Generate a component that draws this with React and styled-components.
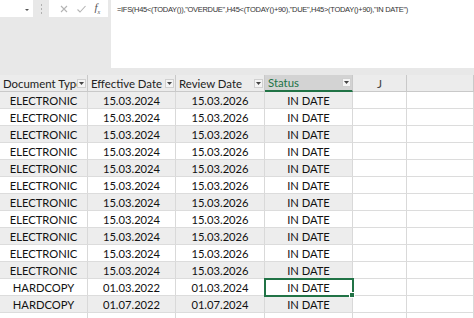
import React from 'react'
import styled, { createGlobalStyle } from 'styled-components'

const GlobalStyle = createGlobalStyle`
  html, body {
    margin: 0;
    padding: 0;
    background: #e8e8e8;
  }
  body {
    width: 474px;
    height: 318px;
    overflow: hidden;
    font-family: Lato, "Liberation Sans", sans-serif;
  }
`

const rows = [
  ...Array.from({ length: 11 }, () => ['ELECTRONIC', '15.03.2024', '15.03.2026', 'IN DATE']),
  ['HARDCOPY', '01.03.2022', '01.03.2024', 'IN DATE'],
  ['HARDCOPY', '01.07.2022', '01.07.2024', 'IN DATE'],
  ['', '', '', ''],
]

const headers = ['Document Type', 'Effective Date', 'Review Date', 'Status']

const formula = '=IFS(H45<(TODAY()),"OVERDUE",H45<(TODAY()+90),"DUE",H45>(TODAY()+90),"IN DATE")'

export default function App() {
  return (
    <>
      <GlobalStyle />
      <Frame>
        <FormulaBar>
          <NameBox>
            <Caret />
          </NameBox>
          <Grip>
            <i /><i /><i />
          </Grip>
          <IconBox>
            <svg width="10" height="10" viewBox="0 0 10 10">
              <path d="M2 2 L8 8 M8 2 L2 8" stroke="#b4b4b4" strokeWidth="1.1" fill="none" />
            </svg>
            <svg width="11" height="10" viewBox="0 0 11 10">
              <path d="M1.5 5.5 L4 8 L9.5 2" stroke="#b4b4b4" strokeWidth="1.1" fill="none" />
            </svg>
            <Fx>f<sub>x</sub></Fx>
          </IconBox>
          <FormulaInput>{formula}</FormulaInput>
        </FormulaBar>

        <Sheet>
          {headers.map((h, i) => (
            <HeaderCell key={h} $active={i === 3}>
              <HeaderText>{h}</HeaderText>
              <FilterButton>
                <svg width="5" height="3" viewBox="0 0 5 3">
                  <path d="M0 0 H5 L2.5 3 Z" fill="#444" />
                </svg>
              </FilterButton>
            </HeaderCell>
          ))}
          <LetterCell>J</LetterCell>
          <LetterCell />

          {rows.map((r, ri) => (
            <React.Fragment key={ri}>
              {r.map((v, ci) => (
                <Cell
                  key={ci}
                  $band={ri % 2 === 0 && ri < 13}
                  $selected={ri === 11 && ci === 3}
                >
                  {v}
                  {ri === 11 && ci === 3 && <FillHandle />}
                </Cell>
              ))}
              <Cell />
              <Cell />
            </React.Fragment>
          ))}
        </Sheet>
      </Frame>
    </>
  )
}

const Frame = styled.div`
  width: 474px;
  height: 318px;
  display: flex;
  flex-direction: column;
  background: #e8e8e8;
`

const FormulaBar = styled.div`
  display: flex;
  align-items: flex-start;
  height: 68px;
  margin-bottom: 7px;
`

const NameBox = styled.div`
  width: 33px;
  height: 17px;
  background: #fff;
  display: flex;
  align-items: center;
  justify-content: flex-end;
  padding-right: 4px;
  box-sizing: border-box;
`

const Caret = styled.span`
  width: 0;
  height: 0;
  margin-top: 2px;
  border-left: 2px solid transparent;
  border-right: 2px solid transparent;
  border-top: 2px solid #555;
`

const Grip = styled.div`
  width: 16px;
  height: 17px;
  display: flex;
  flex-direction: column;
  align-items: center;
  justify-content: center;
  gap: 2px;

  i {
    width: 1px;
    height: 2px;
    background: #b0b0b0;
  }
`

const IconBox = styled.div`
  width: 59px;
  height: 17px;
  background: #fff;
  display: flex;
  align-items: center;
  justify-content: space-around;
  padding: 0 4px 0 6px;
  box-sizing: border-box;
`

const Fx = styled.span`
  font-family: "Liberation Serif", serif;
  font-style: italic;
  font-size: 11px;
  color: #555;

  sub {
    font-size: 6px;
  }
`

const FormulaInput = styled.div`
  flex: 1;
  height: 68px;
  margin-left: 3px;
  background: #fff;
  box-sizing: border-box;
  padding: 5px 0 0 6px;
  font-family: "Liberation Sans", sans-serif;
  font-size: 7.5px;
  letter-spacing: -0.3px;
  color: #333;
  white-space: nowrap;
  overflow: hidden;
`

const Sheet = styled.div`
  flex: 1;
  display: grid;
  grid-template-columns: 88px 88px 89px 88px 54px 1fr;
  grid-auto-rows: 17px;
  background: #fff;
  overflow: hidden;
`

const HeaderCell = styled.div`
  display: flex;
  align-items: center;
  box-sizing: border-box;
  padding: 0 1px 0 3px;
  background: ${(p) => (p.$active ? '#d3d3d3' : '#ececec')};
  border-right: 1px solid #c9c9c9;
  border-bottom: ${(p) => (p.$active ? '2px solid #217346' : '1px solid #c9c9c9')};
  color: ${(p) => (p.$active ? '#217346' : '#222')};
  font-size: 11.4px;
`

const HeaderText = styled.span`
  flex: 1;
  overflow: hidden;
  white-space: nowrap;
`

const FilterButton = styled.span`
  width: 9px;
  height: 9px;
  flex: none;
  box-sizing: border-box;
  border: 1px solid #d0d0d0;
  background: #f5f5f5;
  display: flex;
  align-items: center;
  justify-content: center;
`

const LetterCell = styled.div`
  display: flex;
  align-items: center;
  justify-content: center;
  box-sizing: border-box;
  background: #ececec;
  border-right: 1px solid #c9c9c9;
  border-bottom: 1px solid #c9c9c9;
  color: #444;
  font-size: 12px;
`

const Cell = styled.div`
  position: relative;
  display: flex;
  align-items: center;
  justify-content: center;
  box-sizing: border-box;
  background: ${(p) => (p.$band ? '#ededed' : '#fff')};
  border-right: 1px solid #d9d9d9;
  border-bottom: 1px solid #dcdcdc;
  color: #111;
  font-size: 11.2px;
  ${(p) =>
    p.$selected &&
    `
    outline: 2px solid #217346;
    outline-offset: -1px;
    z-index: 1;
  `}
`

const FillHandle = styled.span`
  position: absolute;
  right: -3px;
  bottom: -3px;
  width: 4px;
  height: 4px;
  background: #217346;
  border: 1px solid #fff;
`
